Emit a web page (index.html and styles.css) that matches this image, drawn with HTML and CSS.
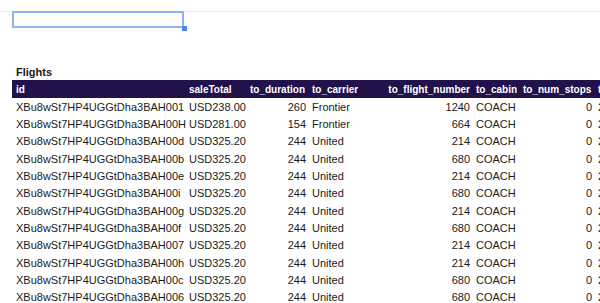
FILE: index.html
```html
<!DOCTYPE html>
<html>
<head>
<meta charset="utf-8">
<link rel="stylesheet" href="styles.css">
</head>
<body>
<div class="topbar"></div>
<div class="selection"><span class="handle"></span></div>
<h2 class="title">Flights</h2>
<table class="grid">
  <colgroup>
    <col class="c-id"><col class="c-sale"><col class="c-dur"><col class="c-car"><col class="c-fn"><col class="c-cab"><col class="c-stops"><col class="c-next">
  </colgroup>
  <thead>
    <tr><th>id</th><th>saleTotal</th><th>to_duration</th><th>to_carrier</th><th class="r">to_flight_number</th><th>to_cabin</th><th>to_num_stops</th><th>to_departure_time</th></tr>
  </thead>
  <tbody>
    <tr><td>XBu8wSt7HP4UGGtDha3BAH001</td><td>USD238.00</td><td class="r">260</td><td>Frontier</td><td class="r">1240</td><td>COACH</td><td class="r">0</td><td>2015-06-01</td></tr>
    <tr><td>XBu8wSt7HP4UGGtDha3BAH00H</td><td>USD281.00</td><td class="r">154</td><td>Frontier</td><td class="r">664</td><td>COACH</td><td class="r">0</td><td>2015-06-01</td></tr>
    <tr><td>XBu8wSt7HP4UGGtDha3BAH00d</td><td>USD325.20</td><td class="r">244</td><td>United</td><td class="r">214</td><td>COACH</td><td class="r">0</td><td>2015-06-01</td></tr>
    <tr><td>XBu8wSt7HP4UGGtDha3BAH00b</td><td>USD325.20</td><td class="r">244</td><td>United</td><td class="r">680</td><td>COACH</td><td class="r">0</td><td>2015-06-01</td></tr>
    <tr><td>XBu8wSt7HP4UGGtDha3BAH00e</td><td>USD325.20</td><td class="r">244</td><td>United</td><td class="r">214</td><td>COACH</td><td class="r">0</td><td>2015-06-01</td></tr>
    <tr><td>XBu8wSt7HP4UGGtDha3BAH00i</td><td>USD325.20</td><td class="r">244</td><td>United</td><td class="r">680</td><td>COACH</td><td class="r">0</td><td>2015-06-01</td></tr>
    <tr><td>XBu8wSt7HP4UGGtDha3BAH00g</td><td>USD325.20</td><td class="r">244</td><td>United</td><td class="r">214</td><td>COACH</td><td class="r">0</td><td>2015-06-01</td></tr>
    <tr><td>XBu8wSt7HP4UGGtDha3BAH00f</td><td>USD325.20</td><td class="r">244</td><td>United</td><td class="r">680</td><td>COACH</td><td class="r">0</td><td>2015-06-01</td></tr>
    <tr><td>XBu8wSt7HP4UGGtDha3BAH007</td><td>USD325.20</td><td class="r">244</td><td>United</td><td class="r">214</td><td>COACH</td><td class="r">0</td><td>2015-06-01</td></tr>
    <tr><td>XBu8wSt7HP4UGGtDha3BAH00h</td><td>USD325.20</td><td class="r">244</td><td>United</td><td class="r">214</td><td>COACH</td><td class="r">0</td><td>2015-06-01</td></tr>
    <tr><td>XBu8wSt7HP4UGGtDha3BAH00c</td><td>USD325.20</td><td class="r">244</td><td>United</td><td class="r">680</td><td>COACH</td><td class="r">0</td><td>2015-06-01</td></tr>
    <tr><td>XBu8wSt7HP4UGGtDha3BAH006</td><td>USD325.20</td><td class="r">244</td><td>United</td><td class="r">680</td><td>COACH</td><td class="r">0</td><td>2015-06-01</td></tr>
  </tbody>
</table>
</body>
</html>
```
FILE: styles.css
```css
html, body {
  margin: 0;
  padding: 0;
  background: #ffffff;
  overflow: hidden;
  width: 600px;
  height: 303px;
}
body {
  font-family: "Liberation Sans", Arial, sans-serif;
  color: #1a1a1a;
}
.topbar {
  height: 11px;
  border-bottom: 1px solid #e8e8e8;
}
.selection {
  position: relative;
  margin: -1px 0 0 12px;
  width: 168px;
  height: 13px;
  border: 2px solid #8fb2f4;
}
.handle {
  position: absolute;
  right: -5px;
  bottom: -5px;
  width: 5px;
  height: 5px;
  background: #4a86ee;
}
.title {
  margin: 38px 0 0 16px;
  font-size: 11px;
  line-height: 13px;
  height: 13px;
  font-weight: bold;
  color: #1a1a1a;
}
.grid {
  margin: 1px 0 0 12px;
  border-collapse: collapse;
  border-spacing: 0;
  table-layout: fixed;
  width: 688px;
  font-size: 11px;
}
.c-id { width: 174px; }
.c-sale { width: 61px; }
.c-dur { width: 62px; }
.c-car { width: 76px; }
.c-fn { width: 88px; }
.c-cab { width: 47px; }
.c-stops { width: 75px; }
.c-next { width: 105px; }
.grid th {
  background: #21124b;
  color: #ffffff;
  font-weight: bold;
  font-size: 10px;
  text-align: left;
  height: 18px;
  padding: 0 3px;
  white-space: nowrap;
  overflow: hidden;
}
.grid th:first-child, .grid td:first-child {
  padding-left: 4px;
}
.grid td {
  height: 17.33px;
  padding: 0 3px;
  white-space: nowrap;
  overflow: hidden;
  color: #1a1a1a;
}
.grid .r {
  text-align: right;
}
.grid th.r {
  text-align: right;
}
```
